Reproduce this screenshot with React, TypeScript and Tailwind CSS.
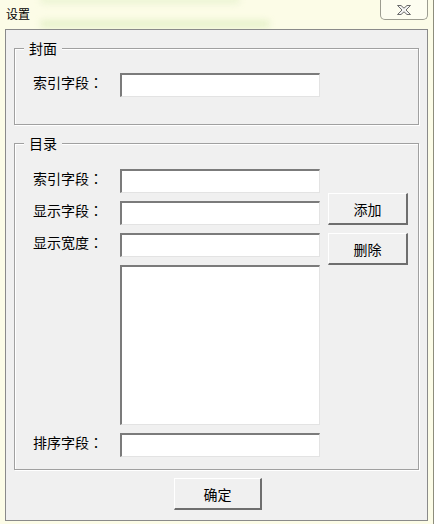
import React from 'react';

const font = { fontFamily: '"Noto Sans CJK SC", "Liberation Sans", sans-serif' };

function TextBox({ className = '' }: { className?: string }) {
  return (
    <div
      className={`w-[200px] h-[24px] bg-white border-t-2 border-l-2 border-b border-r border-t-[#7b7b7b] border-l-[#7b7b7b] border-b-[#e3e3e3] border-r-[#e3e3e3] ${className}`}
    />
  );
}

function Button({ label, className = '' }: { label: string; className?: string }) {
  return (
    <button
      className={`flex items-center justify-center bg-[#f0f0f0] border border-t-white border-l-white border-b-2 border-r-2 border-b-[#6e6e6e] border-r-[#6e6e6e] text-[14px] text-black leading-none ${className}`}
    >
      {label}
    </button>
  );
}

function Group({ title, className = '', children }: { title: string; className?: string; children: React.ReactNode }) {
  return (
    <div className={`relative mx-[8px] border border-[#a0a0a0] shadow-[inset_1px_1px_0_#ffffff,1px_1px_0_#ffffff] ${className}`}>
      {/* caption sits over the top line */}
      <span className="absolute -top-[11px] left-[9px] px-[5px] bg-[#f0f0f0] text-[14px] leading-[20px] text-black">
        {title}
      </span>
      {children}
    </div>
  );
}

function Row({ label, children }: { label?: string; children: React.ReactNode }) {
  return (
    <div className="flex items-start">
      <span className="w-[87px] text-[14px] leading-[16px] pt-[1px] text-black">
        {label}
        {label && <span className="font-['Noto_Sans_CJK_TC',sans-serif]">：</span>}
      </span>
      {children}
    </div>
  );
}

export default function App() {
  return (
    <div className="relative w-[434px] h-[524px] bg-[#fcfce7] overflow-hidden border-r border-r-[#8d8d7c]" style={font}>
      {/* blurred glass behind the title */}
      <div className="absolute left-[40px] top-[20px] w-[230px] h-[8px] rounded-full bg-[#e8f2cc] blur-[3px]" />
      <div className="absolute left-[40px] top-[-4px] w-[200px] h-[8px] rounded-full bg-[#ecf4d4] blur-[3px]" />

      {/* title bar */}
      <div className="relative flex h-[29px]">
        <span className="ml-[6px] mt-[6px] text-[12px] leading-[16px] text-black">设置</span>
        <div className="ml-auto mr-[5px] w-[48px] h-[20px] flex items-center justify-center border border-t-0 border-[#9c9c90] rounded-b-[5px] bg-[#fdfdf0]">
          <svg width="16" height="12" viewBox="0 0 16 12">
            <path
              d="M1.5 1.5 L5 1.5 L8 4.2 L11 1.5 L14.5 1.5 L10 6 L14.5 10.5 L11 10.5 L8 7.8 L5 10.5 L1.5 10.5 L6 6 Z"
              fill="#f4f4f4"
              stroke="#6b6b6b"
              strokeWidth="1"
              strokeLinejoin="round"
            />
          </svg>
        </div>
      </div>

      {/* client area */}
      <div className="relative ml-[5px] mr-[5px] h-[492px] bg-[#f0f0f0] border border-[#8a8a8a] pt-[18px]">
        <Group title="封面" className="h-[77px] pt-[24px] pl-[18px]">
          <Row label="索引字段">
            <TextBox />
          </Row>
        </Group>

        <Group title="目录" className="mt-[18px] h-[327px] pt-[25px] pl-[18px]">
          <div className="flex">
            <div className="flex flex-col gap-[8px]">
              <Row label="索引字段">
                <TextBox />
              </Row>
              <Row label="显示字段">
                <TextBox />
              </Row>
              <Row label="显示宽度">
                <TextBox />
              </Row>
              <Row>
                <TextBox className="h-[160px]" />
              </Row>
              <Row label="排序字段">
                <TextBox />
              </Row>
            </div>
            <div className="ml-[8px] mt-[24px] flex flex-col gap-[8px]">
              <Button label="添加" className="w-[80px] h-[32px]" />
              <Button label="删除" className="w-[80px] h-[32px]" />
            </div>
          </div>
        </Group>

        <div className="flex justify-center mt-[8px] pl-[3px]">
          <Button label="确定" className="w-[88px] h-[32px]" />
        </div>
      </div>
    </div>
  );
}
